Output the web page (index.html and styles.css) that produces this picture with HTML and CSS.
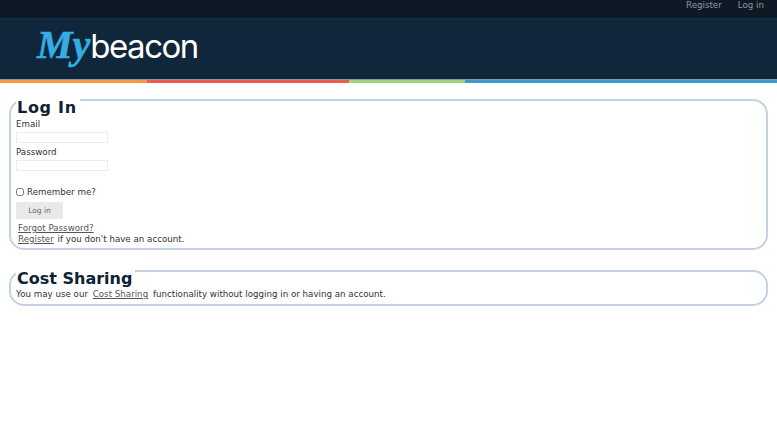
FILE: index.html
```html
<!DOCTYPE html>
<html lang="en">
<head>
<meta charset="utf-8">
<title>Log In - myBeacon</title>
<link rel="stylesheet" href="styles.css">
</head>
<body>
<div class="topbar">
  <a href="#">Register</a>
  <a href="#">Log in</a>
</div>
<header class="brand">
  <a class="logo" href="#"><span class="logo-my">My</span><span class="logo-beacon">beacon</span></a>
</header>
<div class="stripe">
  <span class="s-orange"></span><span class="s-red"></span><span class="s-green"></span><span class="s-blue"></span>
</div>
<main class="content">
  <fieldset class="panel panel-login">
    <legend>Log In</legend>
    <form class="login">
      <label class="field-label" for="email">Email</label>
      <input class="text-input" id="email" type="text">
      <label class="field-label" for="password">Password</label>
      <input class="text-input" id="password" type="password">
      <label class="remember"><input type="checkbox"> Remember me?</label>
      <button class="btn" type="button">Log in</button>
      <div class="links">
        <div><a href="#">Forgot Password?</a></div>
        <div><a href="#">Register</a> <span class="after">if you don't have an account.</span></div>
      </div>
    </form>
  </fieldset>
  <fieldset class="panel">
    <legend>Cost Sharing</legend>
    <p class="note">You may use our <a href="#">Cost Sharing</a> functionality without logging in or having an account.</p>
  </fieldset>
</main>
</body>
</html>
```

FILE: styles.css
```css
* { box-sizing: border-box; }
html, body { height: 100%; }
body {
  margin: 0;
  overflow: hidden;
  background: #fff;
  color: #333;
  font-family: "DejaVu Sans", Verdana, sans-serif;
  font-size: 8.7px;
  line-height: 11px;
}
a { color: #555; }

.topbar {
  height: 18px;
  background: #0d1a25;
  display: flex;
  justify-content: flex-end;
  gap: 16px;
  padding: 0 13px 0 0;
  line-height: 11px;
}
.topbar a { color: #8f979e; text-decoration: none; }

.brand {
  height: 61px;
  background: #10263b;
  border-top: 1px solid #12304a;
  padding: 7px 0 0 37px;
}
.logo { display: flex; align-items: baseline; text-decoration: none; }
.logo-my {
  font-family: "Liberation Serif", serif;
  font-style: italic;
  font-weight: bold;
  font-size: 40px;
  line-height: 37px;
  color: #35ade3;
  -webkit-text-stroke: .6px #35ade3;
}
.logo-beacon {
  font-family: "Inter", sans-serif;
  font-size: 33px;
  line-height: 37px;
  letter-spacing: -1.5px;
  color: #fff;
}

.stripe {
  display: grid;
  grid-template-columns: 147px 202px 116px 1fr;
  height: 3px;
  border-top: 1px solid #8c98a2;
  box-sizing: content-box;
}
.s-orange { background: #f79a44; }
.s-red { background: #ee5a4b; }
.s-green { background: #9fd57d; }
.s-blue { background: #3d9ccb; }

.content {
  padding: 0 9px;
  display: flex;
  flex-direction: column;
  gap: 2px;
}
.panel {
  margin: 0;
  min-width: 0;
  padding: 0 5px 4px;
  border: 2px solid #c4d1e3;
  border-radius: 15px;
}
.panel legend {
  padding: 17px 3px 0 1px;
  font-size: 16px;
  line-height: 20px;
  font-weight: bold;
  color: #0e2233;
}
.panel-login { margin-top: -2px; }
.panel-login legend { letter-spacing: .7px; }

.login { display: flex; flex-direction: column; align-items: flex-start; padding-top: 1px; }
.field-label { display: block; height: 12px; }
.text-input {
  display: block;
  width: 92px;
  height: 11px;
  margin: 1px 0 4px;
  padding: 0;
  border: 1px solid #ececec;
  background: #fff;
}
.remember { display: flex; align-items: center; gap: 3px; margin-top: 11px; height: 12px; }
.remember input { margin: 0; width: 8px; height: 8px; }
.btn {
  margin-top: 4px;
  width: 47px;
  height: 17px;
  padding: 0;
  border: 0;
  border-radius: 2px;
  background: #e9e9e9;
  color: #666;
  font-family: inherit;
  font-size: 7.5px;
}
.links { margin-top: 4px; padding-left: 2px; line-height: 10.5px; }
.after { margin-left: 1px; }
.note { margin: 0; line-height: 11px; }
.note a { margin: 0 2px; }
```
